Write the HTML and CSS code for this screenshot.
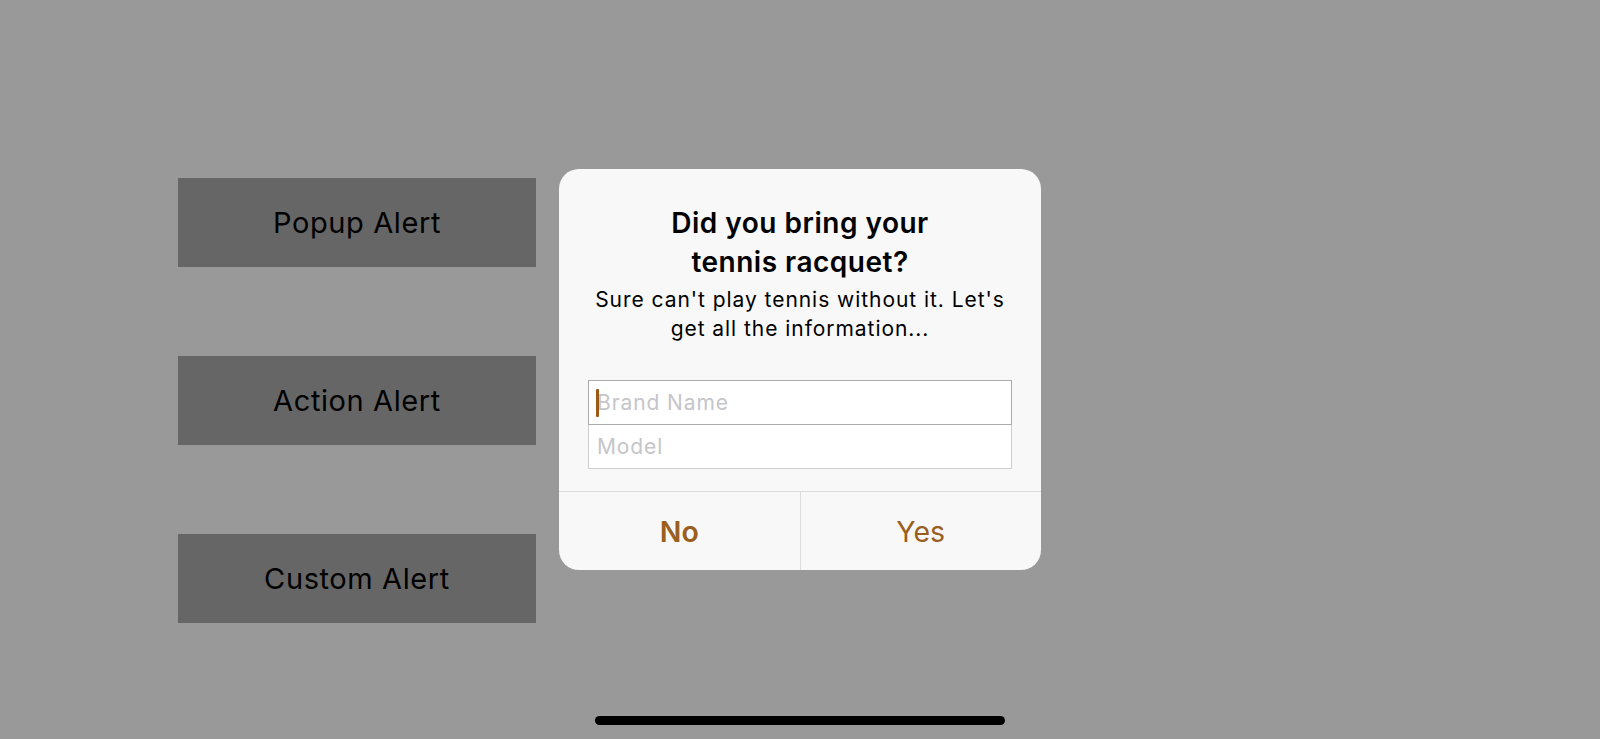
FILE: index.html
```html
<!DOCTYPE html>
<html lang="en">
<head>
<meta charset="utf-8">
<title>Alerts</title>
<link rel="stylesheet" href="styles.css">
</head>
<body>
<div class="screen">
  <div class="buttons">
    <div class="btn">Popup Alert</div>
    <div class="btn">Action Alert</div>
    <div class="btn">Custom Alert</div>
  </div>

  <div class="alert">
    <div class="alert-body">
      <div class="alert-title">Did you bring your<br>tennis racquet?</div>
      <div class="alert-msg">Sure can't play tennis without it. Let's<br>get all the information...</div>
      <div class="fields">
        <div class="field field-first"><span class="cursor"></span><span class="ph">Brand Name</span></div>
        <div class="field field-second"><span class="ph">Model</span></div>
      </div>
    </div>
    <div class="alert-actions">
      <div class="action action-bold">No</div>
      <div class="action">Yes</div>
    </div>
  </div>

  <div class="home-indicator"></div>
</div>
</body>
</html>
```

FILE: styles.css
```css
html, body {
  margin: 0;
  padding: 0;
}

body {
  background: #999999;
  font-family: Inter, "Noto Sans", "Liberation Sans", sans-serif;
  width: 1600px;
  height: 739px;
  overflow: hidden;
}

.screen {
  position: relative;
  width: 1600px;
  height: 739px;
}

.buttons {
  display: flex;
  flex-direction: column;
  gap: 89px;
  padding: 178px 0 0 178px;
  width: 358px;
}

.btn {
  height: 89px;
  background: #666666;
  color: #000;
  font-size: 29px;
  display: flex;
  align-items: center;
  justify-content: center;
  letter-spacing: 0.6px;
}

.alert {
  position: absolute;
  left: 559px;
  top: 169px;
  width: 482px;
  height: 401px;
  background: #f8f8f8;
  border-radius: 20px;
  display: flex;
  flex-direction: column;
  overflow: hidden;
}

.alert-body {
  flex: 1;
  padding: 35px 20px 0 20px;
  display: flex;
  flex-direction: column;
  align-items: center;
  text-align: center;
}

.alert-title {
  font-size: 28px;
  line-height: 38.5px;
  font-weight: 600;
  color: #000;
  letter-spacing: 0.5px;
}

.alert-msg {
  margin-top: 5px;
  font-size: 21px;
  line-height: 28.5px;
  color: #000;
  letter-spacing: 0.95px;
  white-space: nowrap;
}

.fields {
  margin: 37px 9px 0 9px;
  align-self: stretch;
  display: flex;
  flex-direction: column;
}

.field {
  height: 43px;
  background: #ffffff;
  display: flex;
  align-items: center;
  padding-left: 8px;
  font-size: 21px;
  letter-spacing: 0.9px;
  position: relative;
}

.field-first {
  border: 1px solid #ababab;
}

.field-second {
  border: 1px solid #cfcfcf;
  border-top: none;
}

.ph {
  color: #c5c5ca;
}

.cursor {
  position: absolute;
  left: 7px;
  top: 8px;
  width: 3px;
  height: 28px;
  border-radius: 1px;
  background: #9a5a14;
}

.alert-actions {
  height: 78px;
  border-top: 1px solid #dcdcdc;
  display: flex;
}

.action {
  flex: 1;
  display: flex;
  align-items: center;
  justify-content: center;
  font-size: 28.5px;
  color: #9a5f1f;
}

.action + .action {
  border-left: 1px solid #dcdcdc;
}

.action-bold {
  font-weight: 600;
}

.home-indicator {
  position: absolute;
  left: 595px;
  top: 716px;
  width: 410px;
  height: 9px;
  border-radius: 5px;
  background: #000;
}
```
